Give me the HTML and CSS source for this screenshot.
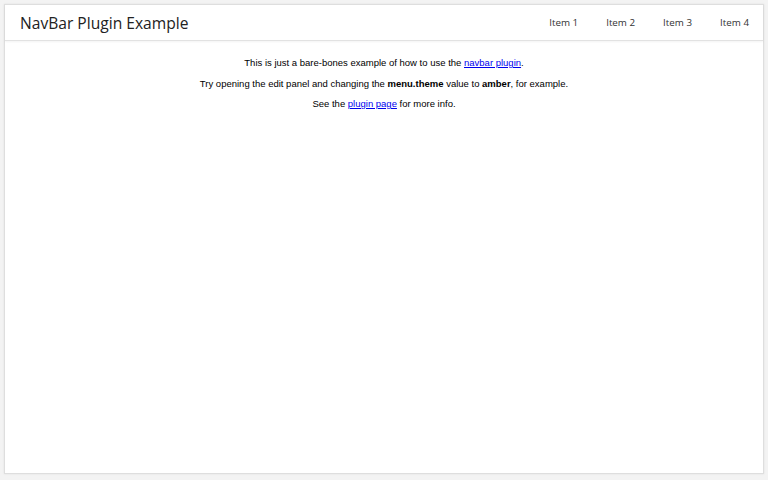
FILE: index.html
```html
<!DOCTYPE html>
<html lang="en">
<head>
    <meta charset="UTF-8">
    <title>NavBar Plugin Example</title>
    <link rel="stylesheet" href="styles.css">
</head>
<body>
    <div class="panel">
        <div class="navbar">
            <div class="brand">NavBar Plugin Example</div>
            <div class="nav-items">
                <a class="nav-item">Item 1</a>
                <a class="nav-item">Item 2</a>
                <a class="nav-item">Item 3</a>
                <a class="nav-item">Item 4</a>
            </div>
        </div>
        <div class="content">
            <p>This is just a bare-bones example of how to use the <a href="#">navbar plugin</a>.</p>
            <p>Try opening the edit panel and changing the <b>menu.theme</b> value to <b>amber</b>, for example.</p>
            <p>See the <a href="#">plugin page</a> for more info.</p>
        </div>
    </div>
</body>
</html>
```

FILE: styles.css
```css
html, body {
    margin: 0;
    height: 100%;
}
body {
    background: #f3f3f3;
    padding: 4px 4px 6px 4px;
    box-sizing: border-box;
}
.panel {
    background: white;
    border: 1px solid #dedede;
    height: 100%;
    box-sizing: border-box;
    box-shadow: 0 0 2px rgba(0, 0, 0, 0.08);
}
.navbar {
    display: flex;
    align-items: center;
    justify-content: space-between;
    height: 35px;
    border-bottom: 1px solid #e2e2e2;
    box-shadow: 0 1px 2px rgba(0, 0, 0, 0.05);
    font-family: 'Open Sans', sans-serif;
}
.brand {
    padding-left: 15px;
    font-size: 15.6px;
    color: #222;
}
.nav-items {
    display: flex;
}
.nav-item {
    padding: 0 14px;
    font-size: 9.8px;
    color: #333;
}
.content {
    text-align: center;
    font-family: 'Liberation Sans', Arial, sans-serif;
    font-size: 9.5px;
    color: #000;
    padding-top: 16px;
}
.content p {
    margin: 0 0 8.5px 0;
    line-height: 12px;
}
.content a {
    color: #0000ee;
}
```
